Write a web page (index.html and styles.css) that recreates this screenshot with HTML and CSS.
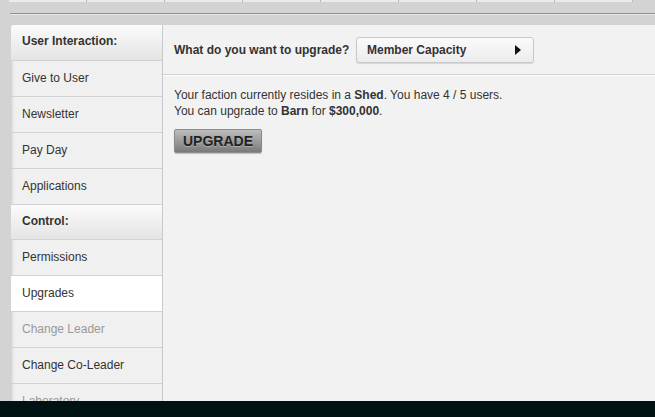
FILE: index.html
```html
<!DOCTYPE html>
<html>
<head>
<meta charset="utf-8">
<link rel="stylesheet" href="styles.css">
</head>
<body>
<div class="page">
  <div class="tabs">
    <span class="tab"></span><span class="tab"></span><span class="tab"></span><span class="tab"></span><span class="tab"></span><span class="tab"></span><span class="tab"></span><span class="tab"></span>
  </div>
  <div class="rule"></div>
  <div class="main">
    <ul class="sidebar">
      <li class="head">User Interaction:</li>
      <li class="item">Give to User</li>
      <li class="item">Newsletter</li>
      <li class="item">Pay Day</li>
      <li class="item">Applications</li>
      <li class="head head-compact">Control:</li>
      <li class="item">Permissions</li>
      <li class="item active">Upgrades</li>
      <li class="item disabled">Change Leader</li>
      <li class="item">Change Co-Leader</li>
      <li class="item disabled">Laboratory</li>
    </ul>
    <div class="content">
      <div class="ask">
        <span class="label">What do you want to upgrade?</span>
        <div class="select"><span>Member Capacity</span><span class="arrow"></span></div>
      </div>
      <div class="divider"></div>
      <div class="info">
        <p>Your faction currently resides in a <b>Shed</b>. You have 4 / 5 users.</p>
        <p>You can upgrade to <b>Barn</b> for <b>$300,000</b>.</p>
        <button class="btn">UPGRADE</button>
      </div>
    </div>
  </div>
  <div class="footer"></div>
</div>
</body>
</html>
```
FILE: styles.css
```css
html, body {
  margin: 0;
  padding: 0;
}
body {
  background: #d3d3d3;
  font-family: "Liberation Sans", Arial, sans-serif;
  font-size: 12px;
  color: #333;
  width: 655px;
  height: 417px;
  overflow: hidden;
}
.page {
  display: flex;
  flex-direction: column;
  height: 417px;
}
.tabs {
  display: flex;
  height: 2px;
  padding-left: 9px;
}
.tab {
  width: 77px;
  height: 2px;
  background: #ebebeb;
  border-right: 1px solid #b8b8b8;
}
.rule {
  margin: 11px 0 0 10px;
  height: 1px;
  background: #8f8f8f;
  border-bottom: 1px solid #e6e6e6;
}
.main {
  flex: 1;
  display: flex;
  margin: 10px 0 0 11px;
  overflow: hidden;
  border-radius: 3px 0 0 0;
}
.sidebar {
  list-style: none;
  margin: 0;
  padding: 0;
  width: 151px;
  flex: none;
  background: #f0f0f0;
  border-right: 1px solid #c9c9c9;
  box-shadow: inset 3px 0 3px -2px #c8c8c8;
}
.sidebar li {
  height: 35px;
  line-height: 35px;
  padding-left: 11px;
  border-bottom: 1px solid #d2d2d2;
  white-space: nowrap;
}
.sidebar .head {
  line-height: 33px;
  font-weight: bold;
  background: linear-gradient(#fbfbfb, #e4e4e4);
}
.sidebar .head-compact {
  height: 34px;
}
.sidebar .active {
  background: #fff;
}
.sidebar .disabled {
  color: #999;
}
.content {
  flex: 1;
  background: #f2f2f2;
}
.ask {
  display: flex;
  align-items: center;
  padding: 12px 0 0 11px;
  height: 26px;
}
.label {
  font-weight: bold;
  width: 182px;
}
.select {
  box-sizing: border-box;
  width: 178px;
  height: 26px;
  display: flex;
  align-items: center;
  justify-content: space-between;
  padding: 0 12px 0 10px;
  border: 1px solid #c8c8c8;
  border-radius: 3px;
  background: linear-gradient(#fafafa, #ececec);
  box-shadow: 0 1px 1px rgba(0,0,0,0.12);
  font-weight: bold;
}
.arrow {
  width: 0;
  height: 0;
  border-top: 5px solid transparent;
  border-bottom: 5px solid transparent;
  border-left: 6px solid #111;
}
.divider {
  margin-top: 11px;
  height: 1px;
  background: #cfcfcf;
  border-bottom: 1px solid #fff;
}
.info {
  padding: 11px 0 0 11px;
}
.info p {
  margin: 0;
  line-height: 16px;
}
.btn {
  margin-top: 10px;
  width: 88px;
  height: 24px;
  border: 1px solid #8a8a8a;
  border-radius: 2px;
  background: linear-gradient(#bdbdbd, #7a7a7a);
  box-shadow: 0 1px 1px rgba(0,0,0,0.2);
  font-family: "Liberation Sans", Arial, sans-serif;
  font-weight: bold;
  font-size: 14px;
  color: #222;
  text-shadow: 0 1px 0 rgba(255,255,255,0.3);
  padding: 0;
}
.footer {
  height: 16px;
  background: #011212;
  flex: none;
}
```
